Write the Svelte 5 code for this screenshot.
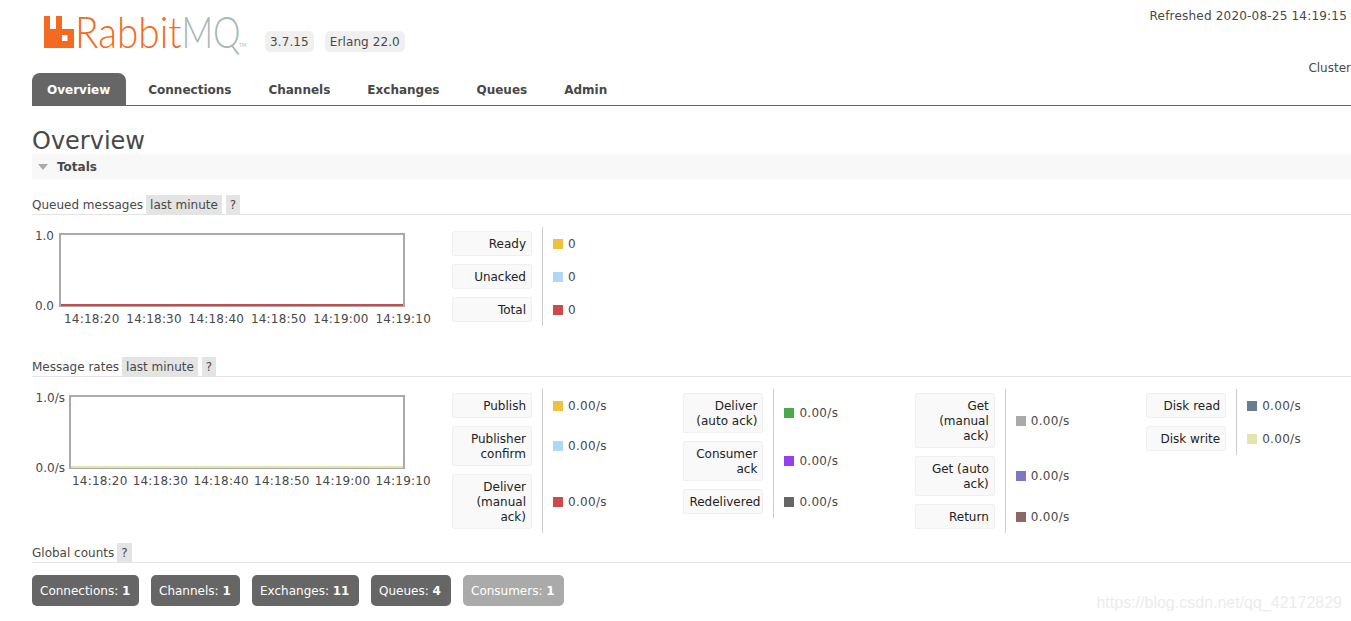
<script lang="ts">
  // RabbitMQ management overview: header, tabs, charts with legends, global counts.
  const tabs = ['Overview', 'Connections', 'Channels', 'Exchanges', 'Queues', 'Admin'];

  const queuedTicks = ['14:18:20', '14:18:30', '14:18:40', '14:18:50', '14:19:00', '14:19:10'];

  const queued = [
    { label: ['Ready'], color: '#edc240', value: '0' },
    { label: ['Unacked'], color: '#afd8f8', value: '0' },
    { label: ['Total'], color: '#cb4b4b', value: '0' },
  ];

  const rateColumns = [
    [
      { label: ['Publish'], color: '#edc240' },
      { label: ['Publisher', 'confirm'], color: '#afd8f8' },
      { label: ['Deliver', '(manual', 'ack)'], color: '#cb4b4b' },
    ],
    [
      { label: ['Deliver', '(auto ack)'], color: '#4da74d' },
      { label: ['Consumer', 'ack'], color: '#9440ed' },
      { label: ['Redelivered'], color: '#666666' },
    ],
    [
      { label: ['Get', '(manual', 'ack)'], color: '#aaaaaa' },
      { label: ['Get (auto', 'ack)'], color: '#7c79c3' },
      { label: ['Return'], color: '#8d6766' },
    ],
    [
      { label: ['Disk read'], color: '#687e8f' },
      { label: ['Disk write'], color: '#e4e4ae' },
    ],
  ];

  const counts = [
    { name: 'Connections', value: 1, width: 107 },
    { name: 'Channels', value: 1, width: 89 },
    { name: 'Exchanges', value: 11, width: 107 },
    { name: 'Queues', value: 4, width: 80 },
    { name: 'Consumers', value: 1, width: 101, muted: true },
  ];
</script>

<div class="page">
  <header class="header">
    <div class="logo">
      <svg class="logo-mark" width="31" height="32" viewBox="0 0 31 32" aria-hidden="true">
        <path
          fill="#f46a21"
          fill-rule="evenodd"
          d="M0 0h6v13h6V0h6v13h12v19H0zM18 19v6h5.500v-6z"
        />
      </svg>
      <span class="logo-text"><span class="rabbit">Rabbit</span><span class="mq">MQ</span></span>
      <span class="tm">TM</span>
    </div>
    <div class="versions">
      <span class="version">3.7.15</span>
      <span class="version">Erlang 22.0</span>
    </div>
    <div class="status">
      <p class="refreshed">Refreshed 2020-08-25 14:19:15</p>
      <p class="cluster">Cluster</p>
    </div>
  </header>

  <nav class="tabs">
    {#each tabs as tab, i}
      <span class="tab" class:active={i === 0}>{tab}</span>
    {/each}
  </nav>

  <h1>Overview</h1>

  <div class="section-head">
    <span class="arrow"></span>
    <span>Totals</span>
  </div>

  <h3 class="sub first">
    <span class="sub-label">Queued messages</span>
    <span class="chip">last minute</span>
    <span class="chip help">?</span>
  </h3>

  <div class="row queued-row">
    <div class="chart queued-chart">
      <div class="y-axis">
        <span>1.0</span>
        <span>0.0</span>
      </div>
      <div class="plot-wrap">
        <div class="plot"><div class="series red"></div></div>
        <div class="ticks">
          {#each queuedTicks as t}<span>{t}</span>{/each}
        </div>
      </div>
    </div>
    <div class="legend">
      <div class="labels">
        {#each queued as item}
          <div class="label">{#each item.label as line}<div>{line}</div>{/each}</div>
        {/each}
      </div>
      <div class="values">
        {#each queued as item}
          <div class="value">
            <i class="swatch" style="background: {item.color}"></i><span class="num">{item.value}</span>
          </div>
        {/each}
      </div>
    </div>
  </div>

  <h3 class="sub rates">
    <span class="sub-label">Message rates</span>
    <span class="chip">last minute</span>
    <span class="chip help">?</span>
  </h3>

  <div class="row rates-row">
    <div class="chart rates-chart">
      <div class="y-axis">
        <span>1.0/s</span>
        <span>0.0/s</span>
      </div>
      <div class="plot-wrap">
        <div class="plot"><div class="series khaki"></div></div>
        <div class="ticks">
          {#each queuedTicks as t}<span>{t}</span>{/each}
        </div>
      </div>
    </div>
    {#each rateColumns as column}
      <div class="legend rate-legend">
        <div class="labels">
          {#each column as item}
            <div class="label">{#each item.label as line}<div>{line}</div>{/each}</div>
          {/each}
        </div>
        <div class="values">
          {#each column as item}
            <div class="value" style="height: {item.label.length * 15 + 10}px">
              <i class="swatch" style="background: {item.color}"></i><span class="num" class:two={item.label.length === 2}>0.00/s</span>
            </div>
          {/each}
        </div>
      </div>
    {/each}
  </div>

  <h3 class="sub global">
    <span class="sub-label">Global counts</span>
    <span class="chip help">?</span>
  </h3>

  <div class="counts">
    {#each counts as c}
      <span class="count" class:muted={c.muted} style="width: {c.width}px">{c.name}: <b>{c.value}</b></span>
    {/each}
  </div>

  <div class="watermark">https://blog.csdn.net/qq_42172829</div>
</div>

<style>
  :global(body) {
    margin: 0;
    background: #fff;
  }

  .page {
    position: relative;
    width: 1351px;
    height: 621px;
    overflow: hidden;
    box-sizing: border-box;
    padding-left: 32px;
    font: 12px/15px "DejaVu Sans", Verdana, sans-serif;
    color: #484848;
  }

  .header {
    display: flex;
    height: 73px;
  }

  .logo {
    display: flex;
    align-items: flex-start;
    width: 233px;
    padding: 16px 0 0 12px;
    box-sizing: border-box;
  }

  .logo-mark {
    flex: none;
  }

  .logo-text {
    display: block;
    width: 164px;
    font: 300 44px/30px Lato, sans-serif;
    white-space: nowrap;
    transform: scaleX(0.88);
    transform-origin: left top;
  }

  .rabbit {
    color: #f46a21;
  }

  .mq {
    display: inline-block;
    color: #a9b8b2;
    transform: scaleX(0.9);
    transform-origin: left top;
  }

  .tm {
    font-size: 5px;
    line-height: 5px;
    margin-top: 27px;
    color: #b5c0bb;
  }

  .versions {
    display: flex;
    gap: 11px;
    padding-top: 31px;
    letter-spacing: 0.1px;
  }

  .version {
    height: 21px;
    line-height: 23px;
    padding: 0 5px;
    border-radius: 5px;
    background: #f0f0f0;
  }

  .status {
    margin-left: auto;
    text-align: right;
  }

  .status p {
    margin: 0;
  }

  .refreshed {
    padding: 9px 4px 0 0;
    letter-spacing: 0.2px;
  }

  .cluster {
    padding-top: 37px;
  }

  .tabs {
    display: flex;
    height: 32px;
    border-bottom: 1px solid #666;
  }

  .tab {
    margin-right: 7px;
    padding: 10px 15px 0;
    font-weight: bold;
    color: #484848;
  }

  .tab.active {
    padding-right: 16px;
    background: #666;
    color: #fff;
    border-radius: 8px 8px 0 0;
  }

  h1 {
    margin: 0;
    padding-top: 22px;
    font-size: 24px;
    line-height: 26px;
    font-weight: normal;
    color: #484848;
  }

  .section-head {
    display: flex;
    align-items: center;
    box-sizing: border-box;
    height: 25px;
    padding-top: 2px;
    background: #f8f8f8;
    font-weight: bold;
  }

  .arrow {
    width: 0;
    height: 0;
    margin: -2px 9px 0 6px;
    border-style: solid;
    border-width: 6px 5.500px 0;
    border-color: #aaa transparent transparent;
  }

  .sub {
    display: flex;
    height: 19px;
    margin: 0;
    align-items: center;
    gap: 4px;
    border-bottom: 1px solid #e4e4e4;
    font-size: 12px;
    font-weight: normal;
  }

  .sub.first {
    margin-top: 16px;
  }

  .sub-label {
    margin-right: -1px;
    padding-top: 2px;
  }

  .chip {
    height: 19px;
    line-height: 21px;
    padding: 0 4px;
    background: #e4e4e4;
  }

  .row {
    display: flex;
    align-items: flex-start;
  }

  .queued-row {
    height: 142px;
    padding-top: 12px;
    box-sizing: border-box;
  }

  .rates-row {
    height: 166px;
    padding-top: 12px;
    box-sizing: border-box;
  }

  .chart {
    display: flex;
    width: 420px;
    flex: none;
  }

  .y-axis {
    display: flex;
    flex-direction: column;
    justify-content: space-between;
    height: 85px;
    flex: none;
    padding-top: 2px;
    text-align: right;
  }

  .queued-chart .y-axis {
    width: 22px;
    margin-right: 5px;
  }

  .rates-chart .y-axis {
    width: 33px;
    margin-right: 4px;
  }

  .plot-wrap {
    flex: 1;
    padding-top: 6px;
  }

  .plot {
    position: relative;
    box-sizing: border-box;
    height: 74px;
    width: 346px;
    border: 2px solid #aaa;
  }

  .rates-chart .plot {
    width: 336px;
  }

  .series {
    position: absolute;
    left: 0;
    right: 0;
    bottom: -1px;
    height: 2px;
  }

  .red {
    background: #cb4b4b;
  }

  .khaki {
    background: #e4e4ae;
  }

  .ticks {
    display: flex;
    justify-content: space-between;
    width: 367px;
    margin: 5px 0 0 5px;
    letter-spacing: 0.2px;
  }

  .rates-chart .ticks {
    width: 359px;
    margin-left: 3px;
  }

  .legend {
    display: flex;
    flex: none;
  }

  .labels {
    display: flex;
    flex-direction: column;
    gap: 8px;
    padding: 4px 10px 4px 0;
    border-right: 1px solid #ccc;
  }

  .label {
    box-sizing: border-box;
    width: 80px;
    padding: 5px 5px 3px;
    text-align: right;
    background: #f9f9f9;
    border: 1px solid #f0f0f0;
    border-radius: 2px;
    color: #222;
  }

  .values {
    display: flex;
    flex-direction: column;
    gap: 8px;
    padding: 4px 0 4px 10px;
  }

  .value {
    display: flex;
    align-items: center;
    min-height: 25px;
  }

  .swatch {
    display: block;
    width: 10px;
    height: 10px;
    margin-right: 5px;
  }

  .num {
    padding-top: 2px;
    letter-spacing: 0.3px;
  }

  .num.two {
    padding-top: 0;
  }

  .rate-legend {
    width: 231.4px;
  }

  .counts {
    display: flex;
    gap: 12px;
    padding-top: 12px;
  }

  .count {
    box-sizing: border-box;
    height: 31px;
    line-height: 33px;
    padding-left: 8px;
    border-radius: 5px;
    background: #666;
    color: #fff;
  }

  .count.muted {
    background: #aaa;
  }

  .watermark {
    position: absolute;
    right: 9px;
    top: 594px;
    font: 16px/18px "Liberation Sans", sans-serif;
    color: #ececec;
  }
</style>
